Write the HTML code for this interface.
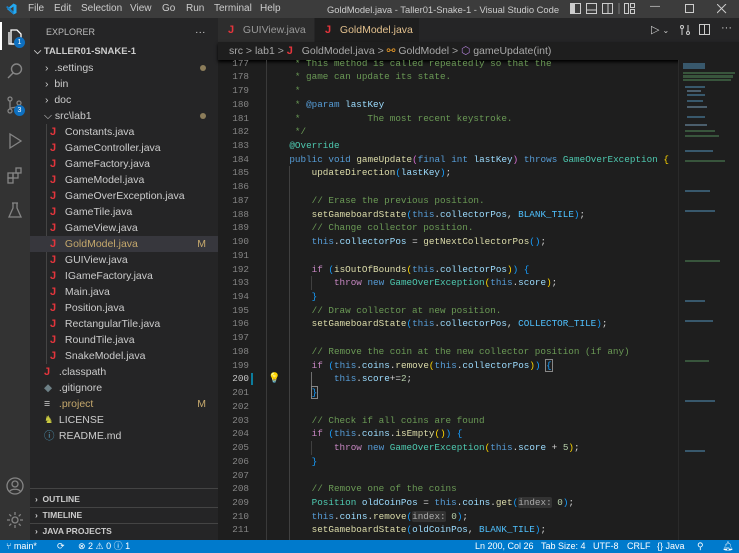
<!DOCTYPE html>
<html><head><meta charset="utf-8"><style>
*{margin:0;padding:0;box-sizing:border-box}
body{width:739px;height:553px;background:#1e1e1e;font-family:"Liberation Sans",sans-serif;font-size:11px;color:#ccc;position:relative;overflow:hidden}
.abs{position:absolute}
#title{left:0;top:0;width:739px;height:18px;background:#3c3c3c;color:#ccc}
#title span{position:absolute;top:3px;font-size:10px}
#act{left:0;top:18px;width:30px;height:522px;background:#333}
#side{left:30px;top:18px;width:188px;height:522px;background:#252526}
.row{position:absolute;left:0;width:188px;height:16px;line-height:16px;font-size:10.5px;color:#ccc;white-space:nowrap}
.J{color:#e5353c;font-weight:bold;font-size:11px;display:inline-block;width:12px}
.M{position:absolute;right:12px;color:#c5a86c}
.dot{position:absolute;right:12px;top:5px;width:6px;height:6px;border-radius:3px;background:#8c7d5a}
#tabs{left:218px;top:18px;width:521px;height:24px;background:#252526}
#bc{left:218px;top:42px;width:521px;height:18px;background:#1e1e1e;font-size:10.5px;color:#a9a9a9;box-shadow:0 2px 3px #000}
#code{left:218px;top:60px;width:460px;height:480px;overflow:hidden}
.l{position:absolute;left:0;height:13.73px;line-height:13.73px;font-family:"Liberation Mono",monospace;font-size:9.3px;white-space:pre;width:460px}
.n{position:absolute;left:0;width:31px;text-align:right;color:#858585}
.t{position:absolute;left:49px;color:#d4d4d4}
.c{color:#6a9955}.k{color:#569cd6}.p{color:#c586c0}.f{color:#dcdcaa}.v{color:#9cdcfe}.ty{color:#4ec9b0}.K{color:#4fc1ff}.nu{color:#b5cea8}.y{color:#ffd700}.m{color:#da70d6}.b{color:#179fff}
.hint{background:#333;color:#aaa;border-radius:2px}
#status{left:0;top:540px;width:739px;height:13px;background:#007acc;color:#fff;font-size:9px;line-height:13px}
#status span{position:absolute;top:0}
</style></head><body>
<div id="title" class="abs">
<svg class="abs" style="left:5px;top:3px" width="12" height="12" viewBox="0 0 12 12"><path d="M8.5 0.5L11.5 2v8L8.5 11.5L2 6z M8.5 3.5L5 6l3.5 2.5z" fill="#23a9f2"/><path d="M1 4l1.5-1 6 5.5v3z" fill="#1b80c4"/></svg>
<span style="left:28px">File</span><span style="left:54px">Edit</span><span style="left:81px">Selection</span><span style="left:130px">View</span><span style="left:162px">Go</span><span style="left:186px">Run</span><span style="left:214px">Terminal</span><span style="left:260px">Help</span>
<span style="left:327px;font-size:9.4px!important;top:4px!important">GoldModel.java - Taller01-Snake-1 - Visual Studio Code</span>
<svg class="abs" style="left:570px;top:3px" width="100" height="12"><rect x="0.5" y="0.5" width="10" height="10" fill="none" stroke="#ccc"/><rect x="1" y="1" width="4" height="9" fill="#ccc"/><rect x="16.5" y="0.5" width="10" height="10" fill="none" stroke="#ccc"/><line x1="17" y1="7" x2="26" y2="7" stroke="#ccc"/><rect x="32.5" y="0.5" width="10" height="10" fill="none" stroke="#ccc"/><line x1="38" y1="1" x2="38" y2="10" stroke="#ccc"/><line x1="49" y1="0" x2="49" y2="11" stroke="#777"/><rect x="54.5" y="0.5" width="4" height="10" fill="none" stroke="#ccc"/><rect x="60.5" y="0.5" width="4" height="4" fill="none" stroke="#ccc"/><rect x="60.5" y="6.5" width="4" height="4" fill="none" stroke="#ccc"/></svg>
<span style="left:650px;top:1px">—</span>
<svg class="abs" style="left:685px;top:4px" width="10" height="10"><rect x="0.5" y="0.5" width="8" height="8" fill="none" stroke="#ccc"/></svg>
<svg class="abs" style="left:717px;top:4px" width="10" height="10"><path d="M0 0L9 9M9 0L0 9" stroke="#ccc"/></svg>
</div>
<div id="act" class="abs">
<div class="abs" style="left:0;top:4px;width:2px;height:28px;background:#fff"></div>
<svg class="abs" style="left:6px;top:9px" width="18" height="18" fill="none" stroke="#fff" stroke-width="1.3"><path d="M5 3h6l4 4v10H5z"/><path d="M3 5v12h9"/></svg>
<div class="abs" style="left:14px;top:19px;width:11px;height:11px;border-radius:6px;background:#0e70c0;color:#fff;font-size:7px;text-align:center;line-height:11px">1</div>
<svg class="abs" style="left:6px;top:44px" width="18" height="18" fill="none" stroke="#858585" stroke-width="1.4"><circle cx="10.5" cy="7" r="5"/><path d="M7 11L2 16"/></svg>
<svg class="abs" style="left:6px;top:78px" width="18" height="18" fill="none" stroke="#858585" stroke-width="1.3"><circle cx="4" cy="3" r="2"/><circle cx="4" cy="15" r="2"/><circle cx="13" cy="7" r="2"/><path d="M4 5v8M13 9c0 3-9 2-9 4"/></svg>
<div class="abs" style="left:14px;top:87px;width:11px;height:11px;border-radius:6px;background:#0e70c0;color:#fff;font-size:7px;text-align:center;line-height:11px">3</div>
<svg class="abs" style="left:6px;top:114px" width="18" height="18" fill="none" stroke="#858585" stroke-width="1.3"><path d="M4 2l11 7-11 7z"/></svg>
<svg class="abs" style="left:6px;top:148px" width="18" height="18" fill="none" stroke="#858585" stroke-width="1.3"><rect x="2" y="7" width="5" height="5"/><rect x="7" y="7" width="5" height="5"/><rect x="2" y="12" width="5" height="5"/><rect x="10" y="2" width="5" height="5"/></svg>
<svg class="abs" style="left:6px;top:183px" width="18" height="18" fill="none" stroke="#858585" stroke-width="1.3"><path d="M6 2h6M7 2v5l-4 9h12l-4-9V2"/></svg>
<svg class="abs" style="left:5px;top:458px" width="20" height="20" fill="none" stroke="#858585" stroke-width="1.3"><circle cx="10" cy="10" r="8"/><circle cx="10" cy="8" r="3"/><path d="M4.5 15.5c2-3 9-3 11 0"/></svg>
<svg class="abs" style="left:5px;top:492px" width="20" height="20" fill="none" stroke="#858585" stroke-width="1.3"><circle cx="10" cy="10" r="3"/><path d="M10 2v3M10 15v3M2 10h3M15 10h3M4.3 4.3l2 2M13.7 13.7l2 2M4.3 15.7l2-2M13.7 6.3l2-2"/></svg>
</div>
<div id="side" class="abs">
<div class="row" style="top:6px;left:16px;font-size:9px;color:#bbb">EXPLORER</div>
<div class="row" style="top:6px;left:165px;width:20px">···</div>
<div class="row" style="top:26px;left:4px;font-weight:bold;font-size:9.5px">⌵ TALLER01-SNAKE-1</div>
<div class="row" style="top:42px"><span style="padding-left:15px">›&nbsp; .settings</span><i class="dot"></i></div>
<div class="row" style="top:58px"><span style="padding-left:15px">›&nbsp; bin</span></div>
<div class="row" style="top:74px"><span style="padding-left:15px">›&nbsp; doc</span></div>
<div class="row" style="top:90px"><span style="padding-left:14px">⌵ src\lab1</span><i class="dot"></i></div>
<div class="abs" style="left:16px;top:106px;width:1px;height:240px;background:#444"></div>
<div class="row" style="top:106px;padding-left:20px"><span class="J">J</span> Constants.java</div>
<div class="row" style="top:122px;padding-left:20px"><span class="J">J</span> GameController.java</div>
<div class="row" style="top:138px;padding-left:20px"><span class="J">J</span> GameFactory.java</div>
<div class="row" style="top:154px;padding-left:20px"><span class="J">J</span> GameModel.java</div>
<div class="row" style="top:170px;padding-left:20px"><span class="J">J</span> GameOverException.java</div>
<div class="row" style="top:186px;padding-left:20px"><span class="J">J</span> GameTile.java</div>
<div class="row" style="top:202px;padding-left:20px"><span class="J">J</span> GameView.java</div>
<div class="row" style="top:218px;padding-left:20px;background:#37373d;color:#c5a86c"><span class="J">J</span> GoldModel.java<span class="M">M</span></div>
<div class="row" style="top:234px;padding-left:20px"><span class="J">J</span> GUIView.java</div>
<div class="row" style="top:250px;padding-left:20px"><span class="J">J</span> IGameFactory.java</div>
<div class="row" style="top:266px;padding-left:20px"><span class="J">J</span> Main.java</div>
<div class="row" style="top:282px;padding-left:20px"><span class="J">J</span> Position.java</div>
<div class="row" style="top:298px;padding-left:20px"><span class="J">J</span> RectangularTile.java</div>
<div class="row" style="top:314px;padding-left:20px"><span class="J">J</span> RoundTile.java</div>
<div class="row" style="top:330px;padding-left:20px"><span class="J">J</span> SnakeModel.java</div>
<div class="row" style="top:346px;padding-left:14px"><span class="J">J</span> .classpath</div>
<div class="row" style="top:362px;padding-left:14px"><span style="color:#6d8086;display:inline-block;width:12px">◆</span> .gitignore</div>
<div class="row" style="top:378px;padding-left:14px;color:#c5a86c"><span style="color:#ccc;display:inline-block;width:12px">≡</span> .project<span class="M">M</span></div>
<div class="row" style="top:394px;padding-left:14px"><span style="color:#cbcb41;display:inline-block;width:12px">♞</span> LICENSE</div>
<div class="row" style="top:410px;padding-left:14px"><span style="color:#519aba;display:inline-block;width:12px">ⓘ</span> README.md</div>
<div class="abs" style="left:0;top:470px;width:188px;height:1px;background:#444"></div>
<div class="row" style="top:473px;padding-left:5px;font-weight:bold;font-size:8.5px">›&nbsp; OUTLINE</div>
<div class="abs" style="left:0;top:489px;width:188px;height:1px;background:#444"></div>
<div class="row" style="top:489px;padding-left:5px;font-weight:bold;font-size:8.5px">›&nbsp; TIMELINE</div>
<div class="abs" style="left:0;top:505px;width:188px;height:1px;background:#444"></div>
<div class="row" style="top:505px;padding-left:5px;font-weight:bold;font-size:8.5px">›&nbsp; JAVA PROJECTS</div>
</div>
<div id="tabs" class="abs">
<div class="abs" style="left:0;top:0;width:96px;height:24px;background:#2d2d2d;line-height:24px;font-size:10.5px;color:#999"><span class="J" style="margin-left:10px">J</span> GUIView.java <span style="color:#aaa;margin-left:4px">●</span></div>
<div class="abs" style="left:97px;top:0;width:104px;height:24px;background:#1e1e1e;line-height:24px;font-size:10.5px;color:#e2c08d"><span class="J" style="margin-left:10px">J</span> GoldModel.java M <span style="color:#fff;margin-left:4px">✕</span></div>
<span class="abs" style="left:433px;top:5px;color:#ccc;font-size:11px">▷ <span style="font-size:8px">⌄</span></span>
<svg class="abs" style="left:461px;top:6px" width="12" height="12" fill="none" stroke="#ccc"><circle cx="3" cy="3" r="1.5"/><circle cx="9" cy="9" r="1.5"/><path d="M3 5v6M9 7V1"/></svg>
<svg class="abs" style="left:481px;top:6px" width="12" height="12" fill="none" stroke="#ccc"><rect x="0.5" y="0.5" width="10" height="10"/><path d="M5.5 1v10"/></svg>
<span class="abs" style="left:503px;top:4px;color:#ccc">···</span>
</div>
<div id="bc" class="abs"><span class="abs" style="left:11px;top:3px">src &gt; lab1 &gt; <span class="J">J</span> GoldModel.java &gt; <span style="color:#ee9d28">⚯</span> GoldModel &gt; <span style="color:#b180d7">⬡</span> gameUpdate(int)</span></div>
<div id="code" class="abs">
<div class="abs" style="left:48px;top:0;width:1px;height:480px;background:#3a3a3a"></div>
<div class="abs" style="left:71px;top:106px;width:1px;height:374px;background:#404040"></div>
<div class="abs" style="left:93px;top:216px;width:1px;height:14px;background:#404040"></div>
<div class="abs" style="left:93px;top:312px;width:1px;height:14px;background:#707070"></div>
<div class="abs" style="left:93px;top:381px;width:1px;height:14px;background:#404040"></div>
<div class="l" style="top:-3.4px"><span class="n">177</span><span class="t c">     * This method is called repeatedly so that the</span></div>
<div class="l" style="top:10.33px"><span class="n">178</span><span class="t c">     * game can update its state.</span></div>
<div class="l" style="top:24.06px"><span class="n">179</span><span class="t c">     *</span></div>
<div class="l" style="top:37.79px"><span class="n">180</span><span class="t c">     * <span class="k">@param</span> <span class="v">lastKey</span></span></div>
<div class="l" style="top:51.52px"><span class="n">181</span><span class="t c">     *            The most recent keystroke.</span></div>
<div class="l" style="top:65.25px"><span class="n">182</span><span class="t c">     */</span></div>
<div class="l" style="top:78.98px"><span class="n">183</span><span class="t">    <span class="ty">@Override</span></span></div>
<div class="l" style="top:92.71px"><span class="n">184</span><span class="t">    <span class="k">public</span> <span class="k">void</span> <span class="f">gameUpdate</span><span class="m">(</span><span class="k">final</span> <span class="k">int</span> <span class="v">lastKey</span><span class="m">)</span> <span class="k">throws</span> <span class="ty">GameOverException</span> <span class="y">{</span></span></div>
<div class="l" style="top:106.44px"><span class="n">185</span><span class="t">        <span class="f">updateDirection</span><span class="b">(</span><span class="v">lastKey</span><span class="b">)</span>;</span></div>
<div class="l" style="top:120.17px"><span class="n">186</span></div>
<div class="l" style="top:133.9px"><span class="n">187</span><span class="t c">        // Erase the previous position.</span></div>
<div class="l" style="top:147.63px"><span class="n">188</span><span class="t">        <span class="f">setGameboardState</span><span class="b">(</span><span class="k">this</span>.<span class="v">collectorPos</span>, <span class="K">BLANK_TILE</span><span class="b">)</span>;</span></div>
<div class="l" style="top:161.36px"><span class="n">189</span><span class="t c">        // Change collector position.</span></div>
<div class="l" style="top:175.09px"><span class="n">190</span><span class="t">        <span class="k">this</span>.<span class="v">collectorPos</span> = <span class="f">getNextCollectorPos</span><span class="b">()</span>;</span></div>
<div class="l" style="top:188.82px"><span class="n">191</span></div>
<div class="l" style="top:202.55px"><span class="n">192</span><span class="t">        <span class="p">if</span> <span class="b">(</span><span class="f">isOutOfBounds</span><span class="y">(</span><span class="k">this</span>.<span class="v">collectorPos</span><span class="y">)</span><span class="b">)</span> <span class="b">{</span></span></div>
<div class="l" style="top:216.28px"><span class="n">193</span><span class="t">            <span class="p">throw</span> <span class="k">new</span> <span class="ty">GameOverException</span><span class="y">(</span><span class="k">this</span>.<span class="v">score</span><span class="y">)</span>;</span></div>
<div class="l" style="top:230.01px"><span class="n">194</span><span class="t">        <span class="b">}</span></span></div>
<div class="l" style="top:243.74px"><span class="n">195</span><span class="t c">        // Draw collector at new position.</span></div>
<div class="l" style="top:257.47px"><span class="n">196</span><span class="t">        <span class="f">setGameboardState</span><span class="b">(</span><span class="k">this</span>.<span class="v">collectorPos</span>, <span class="K">COLLECTOR_TILE</span><span class="b">)</span>;</span></div>
<div class="l" style="top:271.2px"><span class="n">197</span></div>
<div class="l" style="top:284.93px"><span class="n">198</span><span class="t c">        // Remove the coin at the new collector position (if any)</span></div>
<div class="l" style="top:298.66px"><span class="n">199</span><span class="t">        <span class="p">if</span> <span class="b">(</span><span class="k">this</span>.<span class="v">coins</span>.<span class="f">remove</span><span class="y">(</span><span class="k">this</span>.<span class="v">collectorPos</span><span class="y">)</span><span class="b">)</span> <span class="b" style="outline:1px solid #888">{</span></span></div>
<div class="l" style="top:312.39px"><span class="n" style="color:#c6c6c6">200</span><span style="position:absolute;left:50px;top:1px;color:#ffcc00;font-size:10px">💡</span><span class="t">            <span class="k">this</span>.<span class="v">score</span>+=<span class="nu">2</span>;</span></div>
<div class="abs" style="left:33px;top:313px;width:2px;height:12px;background:#0c7d9d"></div>
<div class="l" style="top:326.12px"><span class="n">201</span><span class="t">        <span class="b" style="outline:1px solid #888">}</span></span></div>
<div class="l" style="top:339.85px"><span class="n">202</span></div>
<div class="l" style="top:353.58px"><span class="n">203</span><span class="t c">        // Check if all coins are found</span></div>
<div class="l" style="top:367.31px"><span class="n">204</span><span class="t">        <span class="p">if</span> <span class="b">(</span><span class="k">this</span>.<span class="v">coins</span>.<span class="f">isEmpty</span><span class="y">()</span><span class="b">)</span> <span class="b">{</span></span></div>
<div class="l" style="top:381.04px"><span class="n">205</span><span class="t">            <span class="p">throw</span> <span class="k">new</span> <span class="ty">GameOverException</span><span class="y">(</span><span class="k">this</span>.<span class="v">score</span> + <span class="nu">5</span><span class="y">)</span>;</span></div>
<div class="l" style="top:394.77px"><span class="n">206</span><span class="t">        <span class="b">}</span></span></div>
<div class="l" style="top:408.5px"><span class="n">207</span></div>
<div class="l" style="top:422.23px"><span class="n">208</span><span class="t c">        // Remove one of the coins</span></div>
<div class="l" style="top:435.96px"><span class="n">209</span><span class="t">        <span class="ty">Position</span> <span class="v">oldCoinPos</span> = <span class="k">this</span>.<span class="v">coins</span>.<span class="f">get</span><span class="b">(</span><span class="hint">index:</span> <span class="nu">0</span><span class="b">)</span>;</span></div>
<div class="l" style="top:449.69px"><span class="n">210</span><span class="t">        <span class="k">this</span>.<span class="v">coins</span>.<span class="f">remove</span><span class="b">(</span><span class="hint">index:</span> <span class="nu">0</span><span class="b">)</span>;</span></div>
<div class="l" style="top:463.42px"><span class="n">211</span><span class="t">        <span class="f">setGameboardState</span><span class="b">(</span><span class="v">oldCoinPos</span>, <span class="K">BLANK_TILE</span><span class="b">)</span>;</span></div>
</div>
<div class="abs" style="left:678px;top:60px;width:61px;height:480px;background:#1e1e1e;border-left:1px solid #2a2a2a">
<svg width="61" height="480"><g opacity="0.6"><rect x="4" y="3" width="22" height="6" fill="#4a7fa0"/><rect x="4" y="12" width="52" height="2" fill="#4a7a50"/><rect x="4" y="15" width="50" height="3" fill="#4a7a50"/><rect x="4" y="19" width="48" height="2" fill="#4a7a50"/><rect x="6" y="26" width="20" height="2" fill="#4a7fa0"/><rect x="8" y="30" width="14" height="2" fill="#6a8aa0"/><rect x="8" y="34" width="18" height="2" fill="#4a7fa0"/><rect x="8" y="40" width="16" height="2" fill="#4a7fa0"/><rect x="8" y="46" width="20" height="2" fill="#6a8aa0"/><rect x="8" y="56" width="18" height="2" fill="#4a7fa0"/><rect x="6" y="64" width="22" height="2" fill="#6a8aa0"/><rect x="6" y="70" width="30" height="2" fill="#4a7a50"/><rect x="6" y="75" width="34" height="2" fill="#4a7a50"/><rect x="6" y="90" width="28" height="2" fill="#4a7fa0"/><rect x="6" y="100" width="40" height="2" fill="#4a7a50"/><rect x="6" y="130" width="25" height="2" fill="#4a7fa0"/><rect x="6" y="150" width="30" height="2" fill="#4a7fa0"/><rect x="6" y="200" width="35" height="2" fill="#4a7a50"/><rect x="6" y="240" width="20" height="2" fill="#4a7fa0"/><rect x="6" y="260" width="28" height="2" fill="#4a7fa0"/><rect x="6" y="300" width="24" height="2" fill="#4a7a50"/><rect x="6" y="340" width="30" height="2" fill="#4a7fa0"/><rect x="6" y="390" width="20" height="2" fill="#4a7fa0"/></g></svg>
</div>
<div id="status" class="abs">
<span style="left:6px">⑂ main*</span><span style="left:57px">⟳</span><span style="left:78px">⊗ 2 ⚠ 0 ⓘ 1</span>
<span style="left:475px">Ln 200, Col 26</span><span style="left:541px">Tab Size: 4</span><span style="left:593px">UTF-8</span><span style="left:627px">CRLF</span><span style="left:657px">{} Java</span><span style="left:697px">⚲</span><span style="left:722px">🔔︎</span>
</div>
</body></html>
